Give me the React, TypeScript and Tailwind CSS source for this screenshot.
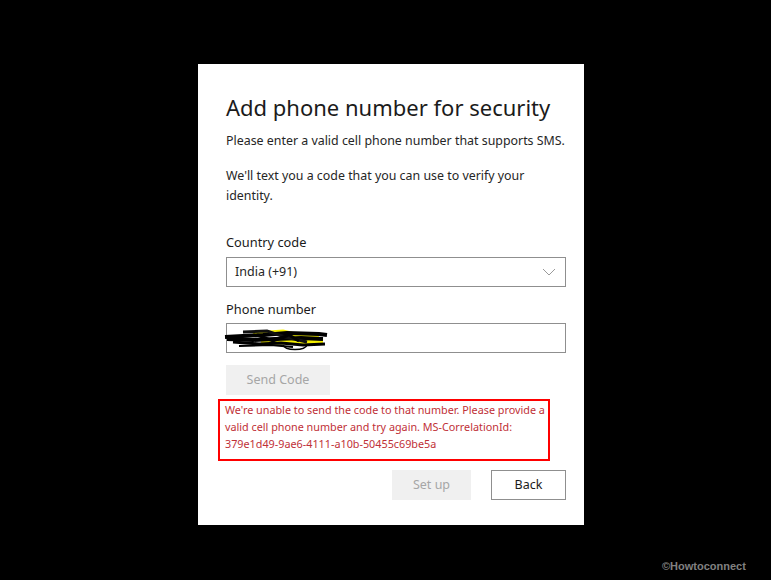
export default function App() {
  return (
    <div className="relative w-[771px] h-[580px] bg-black overflow-hidden" style={{ fontFamily: '"Noto Sans", "Open Sans", sans-serif' }}>
      {/* dialog card */}
      <div className="absolute left-[198px] top-[64px] w-[386px] h-[461px] bg-white pl-[28px] pr-[18px] pt-[27px]">
        <h1 className="text-[22px] leading-[32px] text-[#1b1b1b] font-normal whitespace-nowrap">Add phone number for security</h1>
        <p className="mt-[8px] text-[12.4px] leading-[20px] text-[#262626] whitespace-nowrap">Please enter a valid cell phone number that supports SMS.</p>
        <p className="mt-[15px] text-[12.4px] leading-[20px] text-[#262626] w-[330px]">We'll text you a code that you can use to verify your identity.</p>

        <label className="block mt-[26px] text-[12.8px] leading-[20px] text-[#1b1b1b]">Country code</label>
        <div className="mt-[5px] h-[30px] border border-[#8f8f8f] flex items-center justify-between pl-[8px] pr-[8px]">
          <span className="text-[12.5px] text-[#262626]">India (+91)</span>
          <svg width="14" height="8" viewBox="0 0 14 8" className="mr-[1px]">
            <polyline points="1,1 7,7 13,1" fill="none" stroke="#9a9a9a" strokeWidth="1" />
          </svg>
        </div>

        <label className="block mt-[12px] text-[12.8px] leading-[20px] text-[#1b1b1b]">Phone number</label>
        <div className="relative mt-[4px] h-[30px] border border-[#8f8f8f]">
          {/* redacted number scribble */}
          <svg width="110" height="28" viewBox="0 0 110 28" className="absolute left-[-4px] top-[1px]">
            <path d="M30 9 L60 7 L72 10 L96 11" stroke="#f5f000" strokeWidth="5" fill="none" />
            <path d="M38 17 L75 16 L100 17" stroke="#f5f000" strokeWidth="6" fill="none" />
            <path d="M2 12 L40 10 L64 8 L96 9 L104 10" stroke="#000" strokeWidth="4" fill="none" />
            <path d="M4 14 L30 15 L52 14 L78 13 L100 14" stroke="#000" strokeWidth="4" fill="none" />
            <path d="M10 17 L36 19 L58 18 L80 20 L102 19" stroke="#000" strokeWidth="3" fill="none" />
            <path d="M20 7 L44 6 L62 12 L84 17" stroke="#111" strokeWidth="3" fill="none" />
            <path d="M34 10 L50 16 L66 10 L76 16" stroke="#000" strokeWidth="3" fill="none" />
            <path d="M60 20 C62 26 82 26 84 20" stroke="#000" strokeWidth="1.5" fill="none" />
            <path d="M16 21 L48 20 L70 22" stroke="#000" strokeWidth="2" fill="none" />
          </svg>
        </div>

        <button className="block mt-[12px] w-[104px] h-[30px] bg-[#f0f0f0] text-[12.5px] text-[#a6a6a6]">Send Code</button>

        <div className="-ml-[8px] mt-[4px] w-[332px] h-[62px] border-2 border-[#ff0000] pl-[5px] pt-0">
          <p className="text-[10.8px] leading-[17px] text-[#bf3037]">
            We're unable to send the code to that number. Please provide a valid cell phone number and try again. MS-CorrelationId: 379e1d49-9ae6-4111-a10b-50455c69be5a
          </p>
        </div>

        <div className="mt-[9px] flex justify-end gap-[20px]">
          <button className="w-[79px] h-[30px] bg-[#f0f0f0] text-[12.5px] text-[#a6a6a6]">Set up</button>
          <button className="w-[75px] h-[30px] border border-[#8f8f8f] bg-white text-[12.5px] text-[#1b1b1b]">Back</button>
        </div>
      </div>

      <div className="absolute left-[662px] top-[558px] text-[11px] font-bold text-[#808080]" style={{ fontFamily: '"Liberation Sans", sans-serif' }}>©Howtoconnect</div>
    </div>
  )
}
